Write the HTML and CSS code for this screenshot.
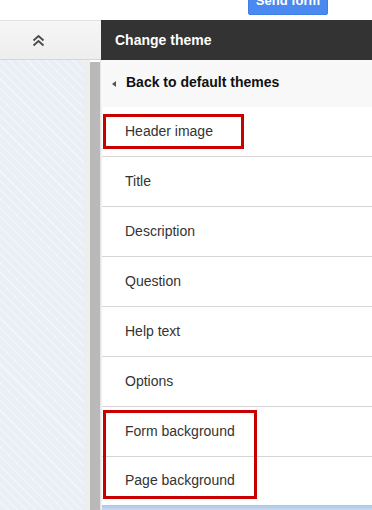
FILE: index.html
```html
<!DOCTYPE html>
<html>
<head>
<meta charset="utf-8">
<link rel="stylesheet" href="styles.css">
</head>
<body>
<div class="topbar">
  <div class="send-btn">Send form</div>
</div>
<div class="main">
  <div class="left">
    <div class="left-head">
      <svg class="chev" width="13" height="13" viewBox="0 0 13 13"><path d="M1.5 6.5 L6.5 2 L11.5 6.5 M1.5 11.5 L6.5 7 L11.5 11.5" fill="none" stroke="#4a4a4a" stroke-width="1.8"/></svg>
    </div>
    <div class="left-body">
      <div class="stripes"></div>
      <div class="gutter"></div>
      <div class="scroll"></div>
      <div class="edge"></div>
    </div>
  </div>
  <div class="panel">
    <div class="panel-head">Change theme</div>
    <div class="back"><span class="tri"></span>Back to default themes</div>
    <div class="list">
      <div class="row">Header image</div>
      <div class="row">Title</div>
      <div class="row">Description</div>
      <div class="row">Question</div>
      <div class="row">Help text</div>
      <div class="row">Options</div>
      <div class="row">Form background</div>
      <div class="row last">Page background</div>
      <div class="blue"></div>
      <div class="mark mark1"></div>
      <div class="mark mark2"></div>
    </div>
  </div>
</div>
</body>
</html>
```
FILE: styles.css
```css
html, body {
  margin: 0;
  padding: 0;
  background: #fff;
  width: 372px;
  height: 510px;
  overflow: hidden;
  font-family: "Liberation Sans", Arial, sans-serif;
}
.topbar {
  height: 20px;
  display: flex;
  justify-content: flex-start;
  padding-left: 248px;
  overflow: visible;
}
.send-btn {
  width: 80px;
  height: 28px;
  margin-top: -13px;
  background: #4a89f0;
  border: 1px solid #3f7ee4;
  box-sizing: border-box;
  border-radius: 2px;
  color: #fff;
  font-weight: bold;
  font-size: 13px;
  line-height: 26px;
  text-align: center;
}
.main {
  display: flex;
  height: 490px;
}
.left {
  width: 101px;
  display: flex;
  flex-direction: column;
}
.left-head {
  height: 40px;
  box-sizing: border-box;
  border-top: 1px solid #e2e2e2;
  border-bottom: 1px solid #d6d6d6;
  background: linear-gradient(#f6f6f6, #eeeeee);
  display: flex;
  align-items: center;
  padding-left: 32px;
}
.chev { display: block; }
.left-body {
  flex: 1;
  display: flex;
}
.stripes {
  width: 84px;
  background-color: #e9eef7;
  background-image: repeating-linear-gradient(45deg, #e9eef7 0px, #e9eef7 5px, #f1f4fa 5px, #f1f4fa 6.5px);
}
.gutter {
  width: 6px;
  background: #eeeeee;
}
.scroll {
  width: 10px;
  margin-top: 2px;
  background: #b9b9b9;
}
.edge {
  width: 1px;
  background: #e6e6e6;
}
.panel {
  flex: 1;
  display: flex;
  flex-direction: column;
}
.panel-head {
  height: 40px;
  background: #333333;
  color: #fff;
  font-weight: bold;
  font-size: 14px;
  display: flex;
  align-items: center;
  padding-left: 14px;
}
.back {
  height: 47px;
  box-sizing: border-box;
  padding-bottom: 4px;
  background: #f8f8f8;
  color: #111;
  font-weight: bold;
  font-size: 14px;
  display: flex;
  align-items: center;
  padding-left: 11px;
}
.tri {
  width: 0;
  height: 0;
  border-top: 3px solid transparent;
  border-bottom: 3px solid transparent;
  border-right: 4px solid #555;
  margin-right: 10px;
  margin-top: 4px;
}
.list {
  position: relative;
  flex: 1;
  border-left: 1px solid #f0f0f0;
}
.row {
  height: 50px;
  box-sizing: border-box;
  padding-bottom: 2px;
  border-bottom: 1px solid #d6d6d6;
  display: flex;
  align-items: center;
  padding-left: 23px;
  font-size: 14px;
  color: #333;
}
.row.last {
  height: 48px;
  border-bottom: none;
}
.blue {
  height: 5px;
  background: linear-gradient(#a9c7ea, #c8daf1);
}
.mark {
  position: absolute;
  border: 3px solid #c80000;
  box-sizing: border-box;
}
.mark1 {
  left: 1px;
  top: 7px;
  width: 141px;
  height: 35px;
}
.mark2 {
  left: 1px;
  top: 303px;
  width: 154px;
  height: 89px;
}
```
